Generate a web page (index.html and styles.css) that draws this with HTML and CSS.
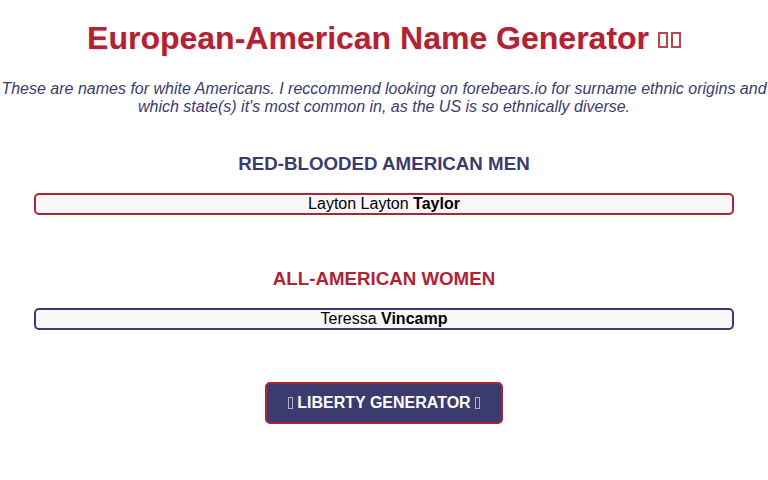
FILE: index.html
```html
<!DOCTYPE html>
<html lang="en">
<head>
    <meta charset="UTF-8">
    <meta name="viewport" content="width=device-width, initial-scale=1.0">
    <title>European-American Name Generator</title>

    <link rel="stylesheet" href="styles.css">
</head>
<body>
    <header>
        <h1>European-American Name Generator <span class="flag"><i class="glyph"></i><i class="glyph"></i></span></h1>
        <p class="intro">These are names for white Americans. I reccommend looking on forebears.io for surname ethnic origins and which state(s) it's most common in, as the US is so ethnically diverse.</p>
    </header>
    <main>
        <section class="group men">
            <h2>RED-BLOODED AMERICAN MEN</h2>
            <div class="name-box">Layton Layton <b>Taylor</b></div>
        </section>
        <section class="group women">
            <h2>ALL-AMERICAN WOMEN</h2>
            <div class="name-box">Teressa <b>Vincamp</b></div>
        </section>
        <div class="actions">
            <button class="generate"><i class="glyph"></i> LIBERTY GENERATOR <i class="glyph"></i></button>
        </div>
    </main>
</body>
</html>
```

FILE: styles.css
```css
/* VARIABLES */

:root {
    --red: #b22234;
    --blue: #3c3b6e;
    --paper: #f8f8fa;
}

/* TYPOGRAPHY */

html {
    font-family: "Liberation Sans", Arial, sans-serif;
}

body {
    margin: 0;
    text-align: center;
}

h1 {
    font-size: 32px;
    line-height: 37px;
    margin: 20px 0 23px;
    color: var(--red);
    text-shadow: 1px 1px 2px rgba(0, 0, 0, 0.12);
}

.intro {
    margin: 0;
    font-style: italic;
    font-size: 16px;
    line-height: 18px;
    color: var(--blue);
}

h2 {
    font-size: 18.72px;
    line-height: 22px;
    margin: 0 0 18px;
}

.men h2 {
    color: var(--blue);
}

.women h2 {
    color: var(--red);
}

/* missing-glyph boxes */

.glyph {
    display: inline-block;
    box-sizing: border-box;
    width: 5px;
    height: 12px;
    border: 1px solid currentColor;
    opacity: 0.6;
    vertical-align: -1px;
}

.flag {
    display: inline-flex;
    gap: 3px;
    vertical-align: 1px;
}

.flag .glyph {
    width: 10px;
    height: 16px;
    border-width: 2px;
    opacity: 0.85;
}

/* LAYOUT */

main {
    display: flex;
    flex-direction: column;
    gap: 53px;
    padding-top: 37px;
}

.name-box {
    max-width: 696px;
    margin: 0 auto;
    font-size: 16px;
    line-height: 18px;
    background-color: var(--paper);
    border: 2px solid var(--red);
    border-radius: 5px;
    color: #000;
}

.women .name-box {
    border-color: var(--blue);
}

.actions {
    margin-top: -1px;
}

.generate {
    font-family: inherit;
    font-weight: bold;
    font-size: 16px;
    color: #fff;
    background-color: var(--blue);
    border: 2px solid var(--red);
    border-radius: 5px;
    width: 238px;
    height: 42px;
    padding: 0;
    cursor: pointer;
}
```
